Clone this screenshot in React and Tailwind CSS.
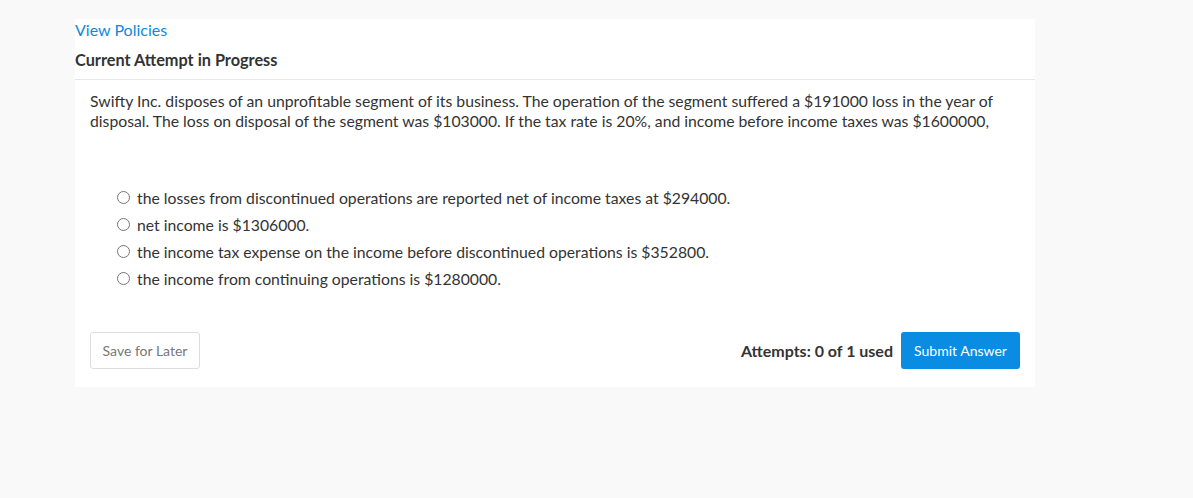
export default function App() {
  const options = [
    "the losses from discontinued operations are reported net of income taxes at $294000.",
    "net income is $1306000.",
    "the income tax expense on the income before discontinued operations is $352800.",
    "the income from continuing operations is $1280000.",
  ];
  return (
    <div className="min-h-[498px] bg-[#f9f9f9] pt-[19px] pl-[75px] text-[#333333]" style={{ fontFamily: "Lato, 'Open Sans', sans-serif" }}>
      <div className="w-[960px] bg-white pb-[18px]">
        <div className="border-b border-[#e6e6e6] pb-[8px]">
          <a className="block text-[16px] leading-[22px] text-[#1188e0]">View Policies</a>
          <div className="mt-[8px] text-[16.3px] leading-[22px] font-bold text-[#333333]">Current Attempt in Progress</div>
        </div>
        <div className="px-[15px] pt-[11px]">
          <p className="text-[15.75px] leading-[20px] text-[#333333]">
            Swifty Inc. disposes of an unprofitable segment of its business. The operation of the segment suffered a $191000 loss in the year of disposal. The loss on disposal of the segment was $103000. If the tax rate is 20%, and income before income taxes was $1600000,
          </p>
          <div className="mt-[53px] flex flex-col pl-[27px]">
            {options.map((o) => (
              <label key={o} className="flex h-[27px] items-center gap-[7px] text-[15.75px] text-[#333333]">
                <span className="h-[13px] w-[13px] shrink-0 rounded-full border border-[#767676] bg-white" />
                <span>{o}</span>
              </label>
            ))}
          </div>
          <div className="mt-[40px] flex items-center justify-between">
            <button className="h-[37px] w-[110px] rounded-[3px] border border-[#dddddd] bg-white text-[14px] text-[#777777]">Save for Later</button>
            <div className="flex items-center gap-[8px]">
              <span className="text-[16px] font-bold text-[#333333]">Attempts: 0 of 1 used</span>
              <button className="h-[37px] w-[119px] rounded-[3px] bg-[#0a8ce2] text-[14px] text-white">Submit Answer</button>
            </div>
          </div>
        </div>
      </div>
    </div>
  );
}
